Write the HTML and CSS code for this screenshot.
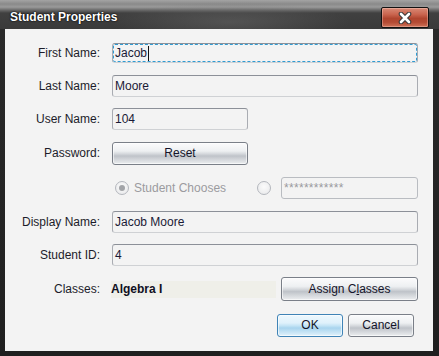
FILE: index.html
```html
<!DOCTYPE html>
<html>
<head>
<meta charset="utf-8">
<link rel="stylesheet" href="styles.css">
</head>
<body>
<div class="window">
  <div class="titlebar">
    <span class="title">Student Properties</span>
    <button class="close" aria-label="Close">
      <svg width="14" height="12" viewBox="0 0 14 12">
        <path d="M3 2 L11 10 M11 2 L3 10" stroke="#3a3a3a" stroke-width="4.6" stroke-linecap="round"/>
        <path d="M3 2 L11 10 M11 2 L3 10" stroke="#ffffff" stroke-width="2.6" stroke-linecap="round"/>
      </svg>
    </button>
  </div>
  <div class="content">
    <div class="row">
      <label class="label">First Name:</label>
      <div class="textfield wide focused">Jacob<span class="caret"></span></div>
    </div>
    <div class="row">
      <label class="label">Last Name:</label>
      <div class="textfield wide">Moore</div>
    </div>
    <div class="row">
      <label class="label">User Name:</label>
      <div class="textfield short">104</div>
    </div>
    <div class="row gap-plus1">
      <label class="label">Password:</label>
      <button class="btn short-btn">Reset</button>
    </div>
    <div class="row gap-plus2">
      <span class="label"></span>
      <div class="choices">
        <span class="radio checked"></span>
        <span class="disabled-text">Student Chooses</span>
        <span class="radio second"></span>
        <div class="textfield pw">************</div>
      </div>
    </div>
    <div class="row gap-plus1">
      <label class="label">Display Name:</label>
      <div class="textfield wide">Jacob Moore</div>
    </div>
    <div class="row">
      <label class="label">Student ID:</label>
      <div class="textfield wide">4</div>
    </div>
    <div class="row gap-plus1">
      <span class="label">Classes:</span>
      <div class="classes">
        <span class="class-list">Algebra I</span>
        <button class="btn assign">Assign C<u>l</u>asses</button>
      </div>
    </div>
    <div class="row actions gap-plus3">
      <button class="btn default">OK</button>
      <button class="btn">Cancel</button>
    </div>
  </div>
</div>
</body>
</html>
```
FILE: styles.css
```css
html, body {
  margin: 0;
  padding: 0;
}
body {
  width: 439px;
  height: 356px;
  overflow: hidden;
  background: #232323;
  font-family: "Liberation Sans", Arial, sans-serif;
  font-size: 12px;
}
.window {
  width: 439px;
  height: 356px;
  display: flex;
  flex-direction: column;
  background: linear-gradient(180deg, #2a2a2a 0%, #1f1f1f 100%);
}
.titlebar {
  height: 29px;
  flex: none;
  display: flex;
  align-items: flex-start;
  padding: 0 10px;
  background:
    radial-gradient(ellipse 120px 20px at 230px 22px, rgba(110,110,110,0.45), rgba(110,110,110,0) 100%),
    linear-gradient(180deg, #a4a4a4 0px, #8a8a8a 4px, #9a9a9a 7px, #6a6a6a 10px, #404040 13px, #3a3a3a 29px);
}
.title {
  margin-top: 11px;
  color: #ffffff;
  font-weight: bold;
  font-size: 12px;
  line-height: 12px;
  text-shadow: 0 0 2px #000, 0 0 1px #000;
}
.close {
  margin-left: auto;
  margin-top: 7px;
  width: 48px;
  height: 21px;
  padding: 0;
  border: 1px solid #111;
  border-radius: 2px;
  background: linear-gradient(180deg, #d98a76 0%, #c9634d 35%, #b0452f 55%, #b44b34 75%, #cf7358 100%);
  box-shadow: inset 0 0 0 1px rgba(255, 220, 210, 0.35);
  display: flex;
  align-items: center;
  justify-content: center;
}
.content {
  flex: 1;
  margin: 0 6px 5px 5px;
  background: #f3f3f3;
  padding: 13px 15px 0 0;
  display: flex;
  flex-direction: column;
  gap: 11px;
  color: #1c1c2a;
}
.row {
  height: 22px;
  display: flex;
  align-items: center;
}
.gap-plus1 { margin-top: 1px; }
.gap-plus2 { margin-top: 2px; }
.gap-plus3 { margin-top: 3px; }
.label {
  width: 95px;
  flex: none;
  margin-right: 12px;
  text-align: right;
}
.textfield {
  position: relative;
  box-sizing: border-box;
  height: 22px;
  line-height: 20px;
  padding: 0 2px;
  border: 1px solid #a9acb2;
  border-top-color: #8c9098;
  border-bottom-color: #cfd1d4;
  border-radius: 3px;
  background: #f3f3f3;
  color: #1a1a36;
  white-space: nowrap;
}
.wide { width: 306px; }
.short { width: 136px; }
.focused {
  height: 20px;
  line-height: 18px;
  outline: 1px dashed #2f9bd2;
  outline-offset: -2px;
}
.caret {
  position: absolute;
  top: 2px;
  width: 1px;
  height: 15px;
  margin-left: 1px;
  background: #111;
}
.choices {
  width: 306px;
  display: flex;
  align-items: center;
}
.radio {
  box-sizing: border-box;
  width: 14px;
  height: 14px;
  border-radius: 50%;
  border: 1px solid #b4b7bd;
  background: radial-gradient(circle at 50% 40%, #fbfbfb 0%, #e6e7e9 100%);
  margin-left: 3px;
  position: relative;
  flex: none;
}
.radio.checked::after {
  content: "";
  position: absolute;
  left: 3px;
  top: 3px;
  width: 6px;
  height: 6px;
  border-radius: 50%;
  background: #a2a4a8;
}
.radio.second {
  margin-left: auto;
  margin-right: 10px;
}
.disabled-text {
  margin-left: 5px;
  color: #9b9b9f;
}
.pw {
  width: 137px;
  color: #9a9a9e;
  border-color: #b9bcc1;
  letter-spacing: 0.3px;
}
.btn {
  box-sizing: border-box;
  height: 23px;
  padding: 0;
  border: 1px solid #7a7f88;
  border-radius: 3px;
  font-family: "Liberation Sans", Arial, sans-serif;
  font-size: 12px;
  color: #14142a;
  background: linear-gradient(180deg, #fbfbfc 0%, #eef0f2 38%, #d8dbdf 50%, #bfc3c9 62%, #d5d8dc 80%, #eceef0 100%);
  box-shadow: inset 0 0 0 1px rgba(255,255,255,0.6);
}
.short-btn { width: 136px; }
.classes {
  width: 306px;
  display: flex;
  align-items: center;
}
.class-list {
  width: 165px;
  height: 17px;
  line-height: 17px;
  margin-left: -1px;
  font-weight: bold;
  background: #efefe9;
  color: #10101e;
}
.assign {
  margin-left: auto;
  width: 137px;
  height: 24px;
}
.actions {
  justify-content: flex-end;
  padding-right: 4px;
  gap: 5px;
}
.actions .btn {
  width: 66px;
}
.btn.default {
  border-color: #3f83b6;
  background: linear-gradient(180deg, #eef8fe 0%, #dff1fb 38%, #c6e5f6 50%, #a8d4ee 62%, #c3e2f4 80%, #e1f2fb 100%);
}
```
